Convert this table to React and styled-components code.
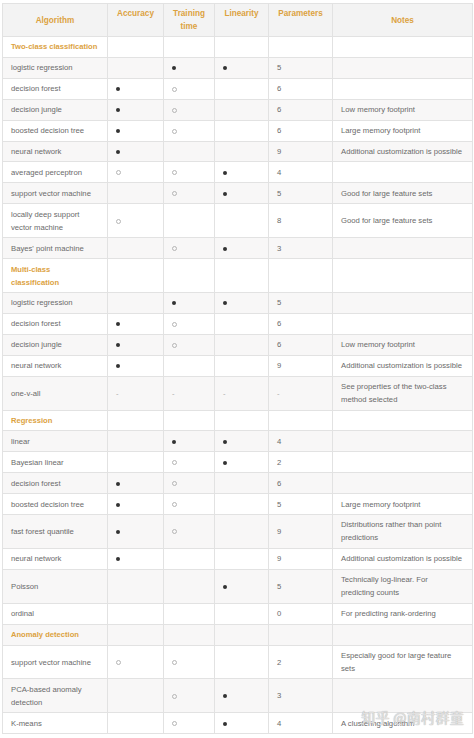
import React from 'react'
import styled, { createGlobalStyle } from 'styled-components'

const GlobalStyle = createGlobalStyle`
  body {
    margin: 0;
    background: #fff;
    font-family: "Liberation Sans", Arial, sans-serif;
  }
`

const Page = styled.div`
  position: relative;
  padding: 3px 2px 0 2px;
`

const Table = styled.table`
  width: 470px;
  table-layout: fixed;
  border-collapse: collapse;
  border: 1px solid #e2e2e2;
`

const HeadCell = styled.th`
  background: #f3f3f3;
  border: 1px solid #e2e2e2;
  padding: 3px 3px;
  color: #dca23f;
  font-size: 8.2px;
  line-height: 13px;
  font-weight: bold;
  text-align: center;
  vertical-align: ${props => (props.middle ? 'middle' : 'top')};
`

const Row = styled.tr`
  background: #fff;

  &:nth-child(even) {
    background: #f8f7f7;
  }
`

const Cell = styled.td`
  border: 1px solid #e2e2e2;
  padding: 3.46px 8px;
  color: #6a6a6a;
  font-size: 7.7px;
  line-height: 13px;
  vertical-align: middle;
  white-space: pre-line;
`

const Section = styled(Cell)`
  color: #dca23f;
  font-weight: bold;
  font-size: 7.6px;
`

const Filled = styled.span`
  display: inline-block;
  width: 4px;
  height: 4px;
  border-radius: 50%;
  background: #333;
  vertical-align: middle;
`

const Hollow = styled.span`
  display: inline-block;
  width: 3px;
  height: 3px;
  border-radius: 50%;
  border: 1px solid #b5b5b5;
  vertical-align: middle;
`

const Dash = styled.span`
  color: #aaa;
`

const Watermark = styled.div`
  position: absolute;
  right: 10px;
  bottom: 7px;
  font-family: "Noto Sans CJK SC", sans-serif;
  font-size: 14px;
  color: rgba(255, 255, 255, 0.6);
  text-shadow: 0 0 1px #b0b0b0, 0 0 1px #b0b0b0;
  letter-spacing: 0.3px;
`

const rows = [
  { section: 'Two-class classification' },
  { name: 'logistic regression', v: ['', 'f', 'f'], p: '5' },
  { name: 'decision forest', v: ['f', 'o', ''], p: '6' },
  { name: 'decision jungle', v: ['f', 'o', ''], p: '6', n: 'Low memory footprint' },
  { name: 'boosted decision tree', v: ['f', 'o', ''], p: '6', n: 'Large memory footprint' },
  { name: 'neural network', v: ['f', '', ''], p: '9', n: 'Additional customization is possible' },
  { name: 'averaged perceptron', v: ['o', 'o', 'f'], p: '4' },
  { name: 'support vector machine', v: ['', 'o', 'f'], p: '5', n: 'Good for large feature sets' },
  { name: 'locally deep support\nvector machine', v: ['o', '', ''], p: '8', n: 'Good for large feature sets' },
  { name: "Bayes' point machine", v: ['', 'o', 'f'], p: '3' },
  { section: 'Multi-class\nclassification' },
  { name: 'logistic regression', v: ['', 'f', 'f'], p: '5' },
  { name: 'decision forest', v: ['f', 'o', ''], p: '6' },
  { name: 'decision jungle', v: ['f', 'o', ''], p: '6', n: 'Low memory footprint' },
  { name: 'neural network', v: ['f', '', ''], p: '9', n: 'Additional customization is possible' },
  { name: 'one-v-all', v: ['-', '-', '-'], p: '-', n: 'See properties of the two-class\nmethod selected' },
  { section: 'Regression' },
  { name: 'linear', v: ['', 'f', 'f'], p: '4' },
  { name: 'Bayesian linear', v: ['', 'o', 'f'], p: '2' },
  { name: 'decision forest', v: ['f', 'o', ''], p: '6' },
  { name: 'boosted decision tree', v: ['f', 'o', ''], p: '5', n: 'Large memory footprint' },
  { name: 'fast forest quantile', v: ['f', 'o', ''], p: '9', n: 'Distributions rather than point\npredictions' },
  { name: 'neural network', v: ['f', '', ''], p: '9', n: 'Additional customization is possible' },
  { name: 'Poisson', v: ['', '', 'f'], p: '5', n: 'Technically log-linear. For\npredicting counts' },
  { name: 'ordinal', v: ['', '', ''], p: '0', n: 'For predicting rank-ordering' },
  { section: 'Anomaly detection' },
  { name: 'support vector machine', v: ['o', 'o', ''], p: '2', n: 'Especially good for large feature\nsets' },
  { name: 'PCA-based anomaly\ndetection', v: ['', 'o', 'f'], p: '3' },
  { name: 'K-means', v: ['', 'o', 'f'], p: '4', n: 'A clustering algorithm' },
]

function Mark ({ value }) {
  if (value === 'f') return <Filled />
  if (value === 'o') return <Hollow />
  if (value === '-') return <Dash>-</Dash>
  return null
}

export default function App () {
  return (
    <Page>
      <GlobalStyle />
      <Table>
        <colgroup>
          <col style={{ width: 105 }} />
          <col style={{ width: 56 }} />
          <col style={{ width: 51 }} />
          <col style={{ width: 54 }} />
          <col style={{ width: 64 }} />
          <col style={{ width: 140 }} />
        </colgroup>
        <thead>
          <tr>
            <HeadCell middle>Algorithm</HeadCell>
            <HeadCell>Accuracy</HeadCell>
            <HeadCell>Training time</HeadCell>
            <HeadCell>Linearity</HeadCell>
            <HeadCell>Parameters</HeadCell>
            <HeadCell middle>Notes</HeadCell>
          </tr>
        </thead>
        <tbody>
          {rows.map((r, i) =>
            r.section ? (
              <Row key={i}>
                <Section>{r.section}</Section>
                <Cell /><Cell /><Cell /><Cell /><Cell />
              </Row>
            ) : (
              <Row key={i}>
                <Cell>{r.name}</Cell>
                {r.v.map((m, j) => (
                  <Cell key={j}><Mark value={m} /></Cell>
                ))}
                <Cell>{r.p === '-' ? <Dash>-</Dash> : r.p}</Cell>
                <Cell>{r.n}</Cell>
              </Row>
            )
          )}
        </tbody>
      </Table>
      <Watermark>知乎 @南村群童</Watermark>
    </Page>
  )
}
